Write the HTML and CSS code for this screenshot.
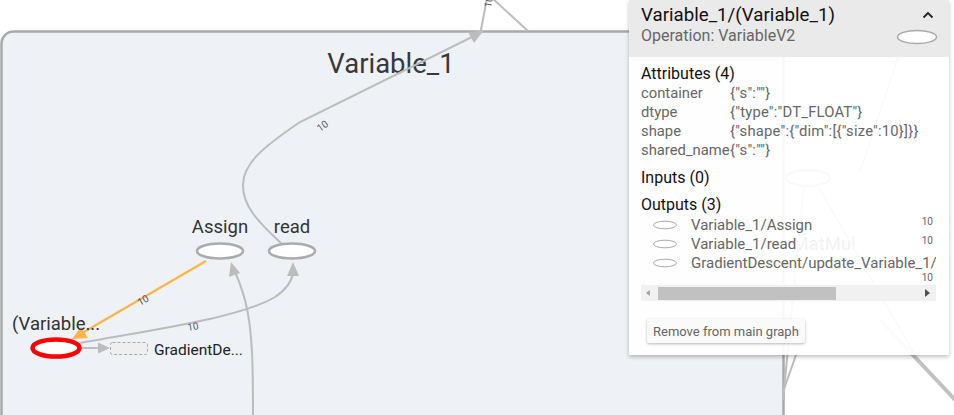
FILE: index.html
```html
<!DOCTYPE html>
<html lang="en">
<head>
<meta charset="utf-8">
<title>Graph - Variable_1</title>
<link rel="stylesheet" href="styles.css">
</head>
<body>
<main class="stage">
  <svg class="graph" width="954" height="415" viewBox="0 0 954 415" xmlns="http://www.w3.org/2000/svg">
    <!-- cluster -->
    <rect class="cluster" x="1.5" y="31.5" width="782" height="420" rx="12" ry="12"/>
    <text class="cluster-label" x="391" y="73">Variable_1</text>

    <!-- edges outside cluster at top -->
    <path class="edge" d="M481 30 L487 -2"/>
    <path class="edge" d="M492 -2 L528 31"/>
    <text class="edge-label" transform="translate(491,8) rotate(-80)">10</text>

    <!-- read -> out of cluster -->
    <path class="edge" d="M281 243 C258 222 242 205 243 184 C244 163 262 148 300 122 L472 37"/>
    <path class="arrow" d="M484 30 L468 32 L474 43 Z"/>
    <text class="edge-label" transform="translate(320,132) rotate(-36)">10</text>

    <!-- from below to Assign -->
    <path class="edge" d="M253 420 C253 370 253 330 245 300 C241 286 238 278 234 270"/>
    <path class="arrow" d="M231 262 L229 277 L240 273 Z"/>

    <!-- orange Assign -> variable -->
    <path class="edge-ref" d="M206 261 L84 332"/>
    <path class="arrow-ref" d="M72 339 L81 327 L88 338 Z"/>
    <text class="edge-label" transform="translate(140,306) rotate(-30)">10</text>

    <!-- variable -> read -->
    <path class="edge" d="M80 343 C150 330 240 318 275 297 C287 289 292 280 293 273"/>
    <path class="arrow" d="M293 262 L287 276 L299 276 Z"/>
    <text class="edge-label" transform="translate(188,331) rotate(-10)">10</text>

    <!-- variable -> GradientDescent -->
    <path class="edge" d="M81 348 L100 348"/>
    <path class="arrow" d="M110 348 L98 342.5 L98 353.5 Z"/>
    <rect class="bridge" x="110.5" y="342.5" width="37" height="12" rx="2"/>
    <text class="node-label-sm" x="154" y="355">GradientDe...</text>

    <!-- nodes -->
    <ellipse class="op" cx="220" cy="251" rx="23" ry="7.5"/>
    <text class="node-label" x="220" y="233">Assign</text>
    <ellipse class="op" cx="292" cy="251" rx="23" ry="7.5"/>
    <text class="node-label" x="292" y="233">read</text>
    <ellipse class="op selected" cx="56" cy="348" rx="23.5" ry="8.5"/>
    <text class="node-label start" x="12" y="330">(Variable...</text>

    <!-- behind panel -->
    <ellipse class="op" cx="808" cy="178" rx="22" ry="8"/>
    <text class="node-label" x="824" y="250">MatMul</text>
    <path class="edge" d="M898 57 L860 172"/>
    <path class="edge" d="M804 186 L783 400"/>
    <path class="edge" d="M818 186 L915 355"/>
    <path class="edge" d="M797 352 L783 392"/>
    <path class="edge-thick" d="M880 320 L960 405"/>
  </svg>

  <aside class="info">
    <header class="info-head">
      <div class="head-row">
        <span class="title">Variable_1/(Variable_1)</span>
        <svg class="chevron" width="12" height="8" viewBox="0 0 12 8" xmlns="http://www.w3.org/2000/svg"><path d="M1.5 6.5 L6 2 L10.5 6.5" fill="none" stroke="#222" stroke-width="1.8"/></svg>
      </div>
      <div class="head-row">
        <span class="op-type">Operation: VariableV2</span>
        <svg class="head-icon" width="42" height="16" viewBox="0 0 42 16" xmlns="http://www.w3.org/2000/svg"><ellipse cx="21" cy="8" rx="19.5" ry="6.5" fill="#fff" stroke="#aaa" stroke-width="1.5"/></svg>
      </div>
    </header>
    <section class="info-body">
      <div class="sec-title">Attributes (4)</div>
      <div class="attrs">
        <span class="k">container</span><span class="v">{"s":""}</span>
        <span class="k">dtype</span><span class="v">{"type":"DT_FLOAT"}</span>
        <span class="k">shape</span><span class="v">{"shape":{"dim":[{"size":10}]}}</span>
        <span class="k">shared_name</span><span class="v">{"s":""}</span>
      </div>
      <div class="sec-title gap">Inputs (0)</div>
      <div class="sec-title gap">Outputs (3)</div>
      <div class="outputs">
        <div class="out-row">
          <svg class="out-icon" width="26" height="10" viewBox="0 0 26 10" xmlns="http://www.w3.org/2000/svg"><ellipse cx="13" cy="5" rx="11.5" ry="3.8" fill="#fff" stroke="#aaa" stroke-width="1"/></svg>
          <span class="out-name">Variable_1/Assign</span>
          <span class="out-shape">10</span>
        </div>
        <div class="out-row">
          <svg class="out-icon" width="26" height="10" viewBox="0 0 26 10" xmlns="http://www.w3.org/2000/svg"><ellipse cx="13" cy="5" rx="11.5" ry="3.8" fill="#fff" stroke="#aaa" stroke-width="1"/></svg>
          <span class="out-name">Variable_1/read</span>
          <span class="out-shape">10</span>
        </div>
        <div class="out-row">
          <svg class="out-icon" width="26" height="10" viewBox="0 0 26 10" xmlns="http://www.w3.org/2000/svg"><ellipse cx="13" cy="5" rx="11.5" ry="3.8" fill="#fff" stroke="#aaa" stroke-width="1"/></svg>
          <span class="out-name">GradientDescent/update_Variable_1/ApplyGradientDescent</span>
        </div>
        <div class="out-wrap"><span class="out-shape">10</span></div>
      </div>
      <div class="hscroll">
        <span class="tri-left"></span>
        <span class="thumb"></span>
        <span class="tri-right"></span>
      </div>
      <button class="remove" type="button">Remove from main graph</button>
    </section>
  </aside>
</main>
</body>
</html>
```

FILE: styles.css
```css
* { box-sizing: border-box; }
html, body {
  margin: 0;
  padding: 0;
  width: 954px;
  height: 415px;
  overflow: hidden;
  background: #fff;
  font-family: Roboto, "Noto Sans", "Liberation Sans", sans-serif;
}
.stage {
  position: relative;
  width: 954px;
  height: 415px;
  overflow: hidden;
}
.graph { display: block; }

.cluster { fill: #eef1f5; stroke: #a9a9ab; stroke-width: 2.5; }
.cluster-label { font-size: 27.5px; fill: #383838; text-anchor: middle; }
.edge { fill: none; stroke: #bcbcbc; stroke-width: 2; }
.edge-thick { fill: none; stroke: #c2c2c2; stroke-width: 4; }
.edge-ref { fill: none; stroke: #fdb44b; stroke-width: 2.3; }
.arrow { fill: #bcbcbc; }
.arrow-ref { fill: #fdb44b; }
.edge-label { font-size: 10px; fill: #556; }
.op { fill: #fff; stroke: #ababab; stroke-width: 2.5; }
.op.selected { stroke: #ff0000; stroke-width: 4.5; }
.bridge { fill: #efefef; stroke: #aaa; stroke-width: 1; stroke-dasharray: 3 2; }
.node-label { font-size: 18.5px; fill: #333; text-anchor: middle; }
.node-label.start { text-anchor: start; }
.node-label-sm { font-size: 15.5px; fill: #222; }

.info {
  position: absolute;
  left: 629px;
  top: 0;
  width: 320px;
  height: 355px;
  background: rgba(255, 255, 255, 0.93);
  box-shadow: 0 2px 4px rgba(0, 0, 0, 0.25);
}
.info-head {
  background: rgba(233, 233, 233, 0.97);
  padding: 4px 12px 10px 12px;
  height: 57px;
}
.head-row {
  display: flex;
  align-items: center;
  justify-content: space-between;
}
.title {
  font-size: 18.7px;
  line-height: 22px;
  color: #111;
}
.chevron { margin-right: 3px; }
.op-type {
  font-size: 16px;
  line-height: 20px;
  color: #666;
}
.head-icon { margin-right: -1px; margin-top: 2px; }

.info-body {
  padding: 8px 13px 0 12px;
}
.sec-title {
  font-size: 16px;
  line-height: 18px;
  color: #111;
}
.sec-title.gap { margin-top: 9px; }
.attrs {
  display: grid;
  grid-template-columns: 89px 1fr;
  font-size: 14.8px;
  line-height: 19px;
  color: #666;
  margin-top: 1px;
  white-space: nowrap;
}
.attrs .v { letter-spacing: 0.2px; }
.outputs {
  width: 295px;
  overflow: hidden;
  margin-top: 1px;
}
.out-row {
  display: flex;
  align-items: center;
  height: 19px;
  position: relative;
  white-space: nowrap;
}
.out-icon { flex: none; margin-left: 11px; margin-right: 13px; }
.out-name { font-size: 15px; color: #666; }
.out-shape {
  position: absolute;
  right: 3px;
  top: 1px;
  font-size: 10px;
  color: #666;
}
.out-wrap {
  position: relative;
  height: 13px;
}
.out-wrap .out-shape { top: 0; }
.hscroll {
  position: relative;
  width: 295px;
  height: 16px;
  background: #f1f1f1;
  display: flex;
  align-items: center;
}
.tri-left {
  width: 0; height: 0;
  border-top: 3.5px solid transparent;
  border-bottom: 3.5px solid transparent;
  border-right: 4px solid #a3a3a3;
  margin-left: 5px;
}
.thumb {
  width: 178px;
  height: 13px;
  background: #c1c1c1;
  margin-left: 8px;
}
.tri-right {
  width: 0; height: 0;
  border-top: 4px solid transparent;
  border-bottom: 4px solid transparent;
  border-left: 5px solid #505050;
  margin-left: auto;
  margin-right: 6px;
}
.remove {
  margin-top: 18px;
  margin-left: 6px;
  height: 24px;
  padding: 0 6px;
  border: none;
  border-radius: 2px;
  background: #fafafa;
  box-shadow: 0 1px 3px rgba(0, 0, 0, 0.28);
  font-family: Roboto, "Noto Sans", sans-serif;
  font-size: 13px;
  color: #666;
}
```
